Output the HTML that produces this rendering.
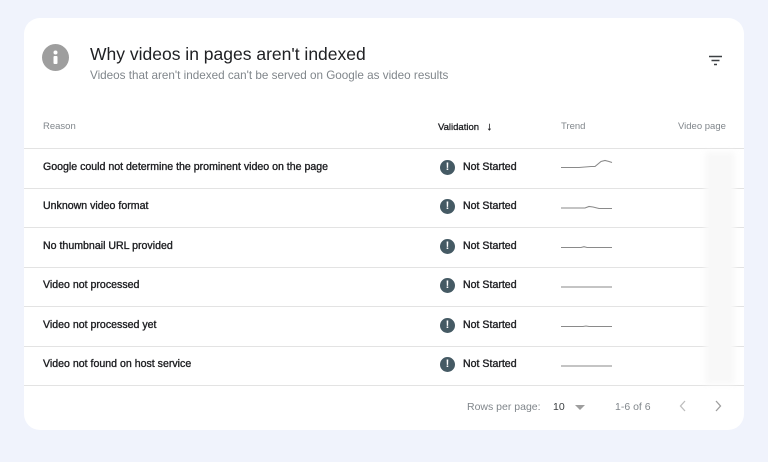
<!DOCTYPE html>
<html><head><style>
body{margin:0;width:768px;height:462px;background:#f0f3fc;font-family:"Liberation Sans",Arial,sans-serif;position:relative;overflow:hidden}
.card{position:absolute;left:24px;top:18px;width:720px;height:412px;background:#fff;border-radius:16px}
.abs{position:absolute}
.info{left:18px;top:26px;width:27px;height:27px;border-radius:50%;background:#9e9e9e}
.title{left:66px;top:26px;font-size:17.5px;color:#202124}
.sub{left:66px;top:51px;font-size:11.7px;color:#80868b}
.hdr{top:103px;font-size:9.5px;color:#80868b}
.line{left:0;width:720px;height:1px;background:#e3e3e3}
.rt{left:19px;font-size:10.6px;color:#202124;-webkit-text-stroke:0.35px #202124}
.ex{left:416px;width:15px;height:15px;border-radius:50%;background:#455a64;color:#fff;font-size:11px;font-weight:bold;text-align:center;line-height:15px}
.ns{left:439px;font-size:10.6px;color:#202124;-webkit-text-stroke:0.35px #202124}
.blur{left:681px;top:134px;width:30px;height:232px;background:#f8f8f8;filter:blur(3px)}
</style></head><body>
<div class="card">
<div class="abs info"><svg width="27" height="27"><circle cx="13.5" cy="8.5" r="2" fill="#fff"/><rect x="11.5" y="12" width="4" height="8" rx="1" fill="#fff"/></svg></div>
<div class="abs title">Why videos in pages aren't indexed</div>
<div class="abs sub">Videos that aren't indexed can't be served on Google as video results</div>
<svg class="abs" style="left:684px;top:37px" width="16" height="12"><path d="M1 1.5h13M3.5 5.5h8M6 9.5h3" stroke="#3c4043" stroke-width="1.5"/></svg>
<div class="abs hdr" style="left:19px">Reason</div>
<div class="abs hdr" style="left:414px;color:#202124;-webkit-text-stroke:0.3px #202124">Validation <span style="font-size:11px;margin-left:5px">↓</span></div>
<div class="abs hdr" style="left:537px">Trend</div>
<div class="abs hdr" style="left:654px">Video page</div>
<div class="abs line" style="top:130px"></div>
<div class="abs line" style="top:170px"></div>
<div class="abs line" style="top:209px"></div>
<div class="abs line" style="top:249px"></div>
<div class="abs line" style="top:288px"></div>
<div class="abs line" style="top:328px"></div>
<div class="abs line" style="top:367px"></div>
<div class="abs blur"></div>

<div class="abs rt" style="top:143px">Google could not determine the prominent video on the page</div>
<div class="abs rt" style="top:182px">Unknown video format</div>
<div class="abs rt" style="top:222px">No thumbnail URL provided</div>
<div class="abs rt" style="top:261px">Video not processed</div>
<div class="abs rt" style="top:301px">Video not processed yet</div>
<div class="abs rt" style="top:340px">Video not found on host service</div>

<div class="abs ex" style="top:142px">!</div><div class="abs ns" style="top:143px">Not Started</div>
<div class="abs ex" style="top:181px">!</div><div class="abs ns" style="top:182px">Not Started</div>
<div class="abs ex" style="top:221px">!</div><div class="abs ns" style="top:222px">Not Started</div>
<div class="abs ex" style="top:260px">!</div><div class="abs ns" style="top:261px">Not Started</div>
<div class="abs ex" style="top:300px">!</div><div class="abs ns" style="top:301px">Not Started</div>
<div class="abs ex" style="top:339px">!</div><div class="abs ns" style="top:340px">Not Started</div>

<svg class="abs" style="left:537px;top:135px" width="52" height="240" fill="none" stroke="#8a8a8a" stroke-width="1.1">
<path d="M0 14.5h18l12-1h4l6-5 4-1 4 1 3 1"/>
<path d="M0 55h24l4-1.5 4 0.5 6 1.5h13"/>
<path d="M0 94.5h20l3-0.8 3 0.8h25"/>
<path d="M0 134h51"/>
<path d="M0 173.5h22l3-0.5 3 0.5h23"/>
<path d="M0 213h51"/>
</svg>

<div class="abs" style="left:443px;top:383px;font-size:10.5px;color:#80868b">Rows per page:</div>
<div class="abs" style="left:529px;top:383px;font-size:10.5px;color:#3c4043">10</div>
<svg class="abs" style="left:551px;top:387px" width="10" height="6"><path d="M0 0h10L5 5z" fill="#9e9e9e"/></svg>
<div class="abs" style="left:591px;top:383px;font-size:10.5px;color:#80868b">1-6 of 6</div>
<svg class="abs" style="left:655px;top:382px" width="8" height="12"><path d="M6 1L1.5 6 6 11" stroke="#bdbdbd" stroke-width="1.3" fill="none"/></svg>
<svg class="abs" style="left:690px;top:382px" width="8" height="12"><path d="M2 1l4.5 5L2 11" stroke="#9e9e9e" stroke-width="1.3" fill="none"/></svg>
</div>
</body></html>
